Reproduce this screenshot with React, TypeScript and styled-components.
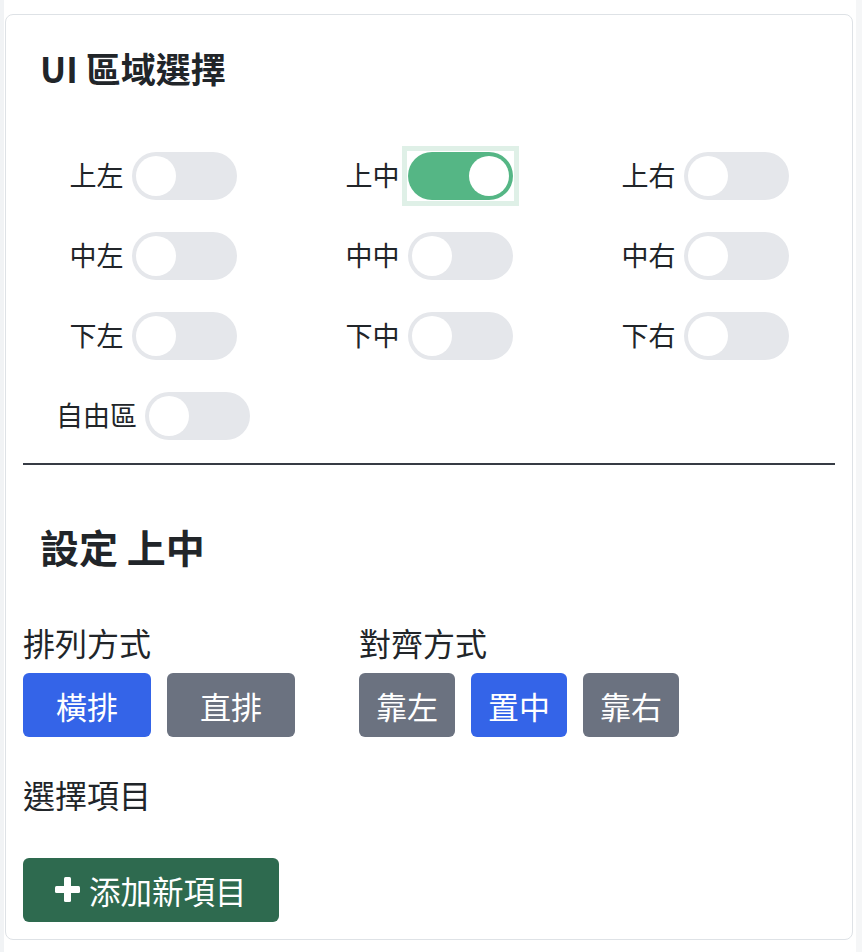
import styled, { createGlobalStyle } from "styled-components";
import { FC, useState } from "react";

const GlobalStyle = createGlobalStyle`
  body {
    margin: 0;
    background: #ffffff;
    font-family: "Noto Sans CJK TC", "Noto Sans", sans-serif;
    color: #212529;
  }
`;

const zones = [
	["上左", "上中", "上右"],
	["中左", "中中", "中右"],
	["下左", "下中", "下右"],
	["自由區"],
];

const Switch: FC<{ label: string; on: boolean; onToggle: () => void }> = ({ label, on, onToggle }) => (
	<Cell>
		<CellLabel>{label}</CellLabel>
		<SwitchButton focused={on} onClick={onToggle}>
			<Track on={on}>
				<Knob on={on} />
			</Track>
		</SwitchButton>
	</Cell>
);

const App: FC = () => {
	const [active, setActive] = useState("上中");
	const [layout, setLayout] = useState("橫排");
	const [align, setAlign] = useState("置中");

	return (
		<>
			<GlobalStyle />
			<Page>
				<Card>
					<Title size={35}>UI 區域選擇</Title>

					<ZoneGrid>
						{zones.flat().map((z) => (
							<Switch key={z} label={z} on={active === z} onToggle={() => setActive(z)} />
						))}
					</ZoneGrid>

					<Divider />

					<Title size={39} top={58}>設定 {active}</Title>

					<FieldRow>
						<Field>
							<FieldLabel>排列方式</FieldLabel>
							<ButtonRow>
								{["橫排", "直排"].map((b) => (
									<ChoiceButton key={b} w={128} selected={layout === b} onClick={() => setLayout(b)}>
										{b}
									</ChoiceButton>
								))}
							</ButtonRow>
						</Field>
						<Field>
							<FieldLabel>對齊方式</FieldLabel>
							<ButtonRow>
								{["靠左", "置中", "靠右"].map((b) => (
									<ChoiceButton key={b} w={96} selected={align === b} onClick={() => setAlign(b)}>
										{b}
									</ChoiceButton>
								))}
							</ButtonRow>
						</Field>
					</FieldRow>

					<FieldLabel top={38}>選擇項目</FieldLabel>

					<AddButton>
						<svg width="25" height="25" viewBox="0 0 25 25">
							<rect x="9" y="0" width="7" height="25" rx="1.5" fill="#fff" />
							<rect x="0" y="9" width="25" height="7" rx="1.5" fill="#fff" />
						</svg>
						添加新項目
					</AddButton>
				</Card>
			</Page>
		</>
	);
};

export default App;

const Page = styled.div`
  padding: 14px 3px 12px 1px;
  border-left: 4px solid #f1f3f5;
  border-right: 6px solid #f5f6f7;
`;

const Card = styled.div`
  border: 1px solid #dee2e6;
  border-radius: 8px;
  padding: 0 17px 17px;
  display: flex;
  flex-direction: column;
  align-items: flex-start;
`;

const Title = styled.h2<{ size: number; top?: number }>`
  margin: ${(p) => p.top ?? 32}px 0 0;
  padding-left: 17px;
  font-size: ${(p) => p.size}px;
  font-weight: 700;
  line-height: 1.2;
`;

const ZoneGrid = styled.div`
  align-self: stretch;
  display: grid;
  grid-template-columns: repeat(3, 1fr);
  row-gap: 32px;
  margin: 63px -8px 0;
`;

const Cell = styled.div`
  display: flex;
  align-items: center;
  justify-content: center;
  gap: 8px;
  height: 48px;
`;

const CellLabel = styled.span`
  font-size: 27px;
  line-height: 1;
  padding-bottom: 4px;
`;

const SwitchButton = styled.button<{ focused: boolean }>`
  border: none;
  background: transparent;
  padding: 0;
  cursor: pointer;
  box-shadow: ${(p) => (p.focused ? "0 0 0 1px #fff, 0 0 0 6px #dff0e7" : "none")};
`;

const Track = styled.span<{ on: boolean }>`
  display: flex;
  align-items: center;
  justify-content: ${(p) => (p.on ? "flex-end" : "flex-start")};
  width: 105px;
  height: 48px;
  padding: 0 4px;
  box-sizing: border-box;
  border-radius: 24px;
  background: ${(p) => (p.on ? "#55b685" : "#e5e7eb")};
`;

const Knob = styled.span<{ on: boolean }>`
  width: 40px;
  height: 40px;
  border-radius: 50%;
  background: #ffffff;
`;

const Divider = styled.hr`
  align-self: stretch;
  margin: 23px 0 0;
  border: none;
  border-top: 2px solid #363b44;
`;

const FieldRow = styled.div`
  display: flex;
  gap: 64px;
  margin-top: 53px;
`;

const Field = styled.div`
  display: flex;
  flex-direction: column;
  gap: 12px;
`;

const FieldLabel = styled.div<{ top?: number }>`
  margin-top: ${(p) => p.top ?? 0}px;
  font-size: 32px;
  line-height: 1.2;
`;

const ButtonRow = styled.div`
  display: flex;
  gap: 16px;
`;

const ChoiceButton = styled.button<{ w: number; selected: boolean }>`
  width: ${(p) => p.w}px;
  height: 64px;
  border: none;
  border-radius: 6px;
  background: ${(p) => (p.selected ? "#3464e8" : "#6b7280")};
  color: #ffffff;
  font-family: inherit;
  font-size: 31px;
  cursor: pointer;
`;

const AddButton = styled.button`
  display: flex;
  align-items: center;
  gap: 9px;
  margin-top: 44px;
  height: 64px;
  padding: 0 32px 0 32px;
  border: none;
  border-radius: 6px;
  background: #2e6a4f;
  color: #ffffff;
  font-family: inherit;
  font-size: 31.5px;
  cursor: pointer;
`;
